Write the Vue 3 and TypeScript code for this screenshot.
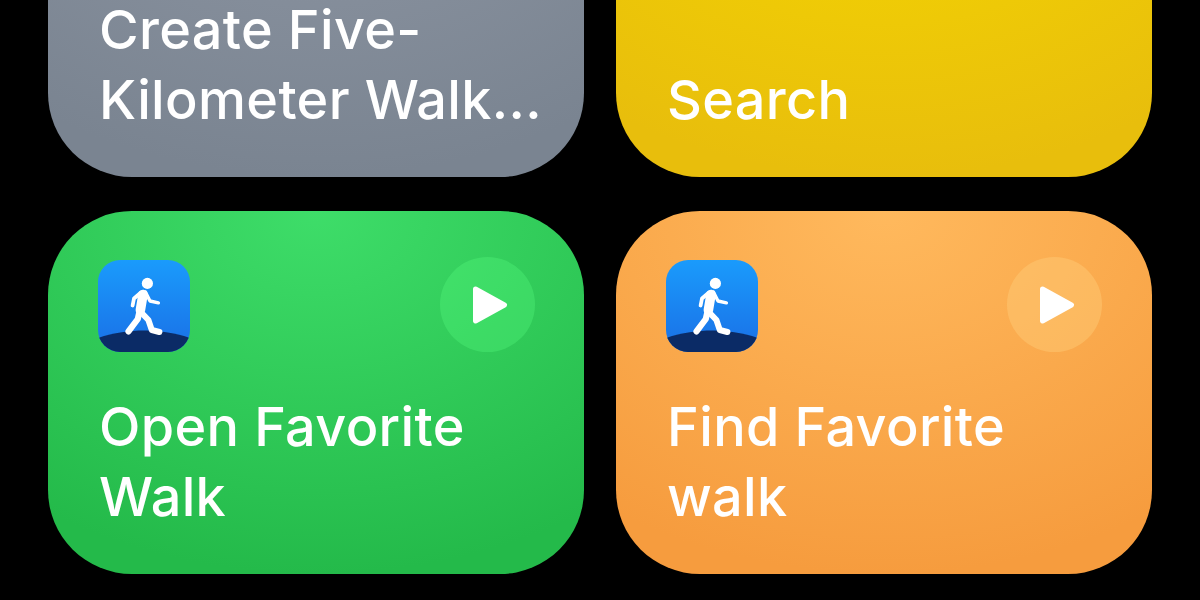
<script setup lang="ts">
interface Shortcut {
  title: string
  color: string
  app: boolean
}

const shortcuts: Shortcut[] = [
  { title: 'Create Five-\nKilometer Walk...', color: 'gray', app: false },
  { title: 'Search', color: 'yellow', app: false },
  { title: 'Open Favorite\nWalk', color: 'green', app: true },
  { title: 'Find Favorite\nwalk', color: 'orange', app: true },
]
</script>

<template>
  <div class="screen">
    <div class="grid">
      <div v-for="item in shortcuts" :key="item.title" class="card" :class="item.color">
        <div v-if="item.app" class="top">
          <svg class="app-icon" viewBox="0 0 92 92" width="92" height="92">
            <defs>
              <linearGradient id="sky" x1="0" y1="0" x2="0" y2="1">
                <stop offset="0" stop-color="#1a9bfc" />
                <stop offset="1" stop-color="#1a6fe6" />
              </linearGradient>
            </defs>
            <rect width="92" height="92" fill="url(#sky)" />
            <path d="M0 78 C16 72.5 32 70.5 46 70.5 C60 70.5 76 72.5 92 78 V92 H0 Z" fill="#0b2b66" />
            <circle cx="49.4" cy="23.4" r="5.6" fill="#fff" />
            <g fill="none" stroke="#fff" stroke-linecap="round" stroke-linejoin="round">
              <path d="M45 34.5 L42.4 50" stroke-width="9.6" />
              <path d="M41.4 52 L39.8 59 L30.5 71.4" stroke-width="6.2" />
              <path d="M42.8 52 L50.4 60 L53.8 70 L61.4 72" stroke-width="6" />
              <path d="M42.4 33 L36 38.5 L34.6 45.5" stroke-width="3.8" />
              <path d="M47.4 32 L52 41 L60.4 42.8" stroke-width="3.4" />
            </g>
          </svg>
          <div class="play">
            <svg viewBox="0 0 36 40" width="36" height="40">
              <path d="M3.5 4 L32.5 20 L3.5 36 Z" fill="#fff" stroke="#fff" stroke-width="5" stroke-linejoin="round" />
            </svg>
          </div>
        </div>
        <div class="title">{{ item.title }}</div>
      </div>
    </div>
  </div>
</template>

<style>
html,
body {
  margin: 0;
  background: #000;
}
</style>

<style scoped>
.screen {
  width: 1200px;
  height: 600px;
  overflow: hidden;
  display: flex;
  align-items: flex-end;
  background: #000;
  font-family: Inter, 'Liberation Sans', sans-serif;
}

.grid {
  box-sizing: border-box;
  width: 100%;
  padding: 0 48px 26px;
  display: grid;
  grid-template-columns: 536px 536px;
  grid-auto-rows: 363px;
  column-gap: 32px;
  row-gap: 34px;
}

.card {
  box-sizing: border-box;
  padding: 46px 49px 42px 50px;
  border-radius: 84px;
  display: flex;
  flex-direction: column;
  justify-content: flex-end;
  color: #fff;
}

.gray {
  background: radial-gradient(ellipse 90% 100% at 50% 0, #8f97a4, #7a8491);
}

.yellow {
  background: radial-gradient(ellipse 90% 100% at 50% 0, #f6d800, #e8be0c);
}

.green {
  background: radial-gradient(ellipse 90% 100% at 50% 0, #3edd69, #24ba4a);
}

.orange {
  padding-right: 50px;
  background: radial-gradient(ellipse 90% 100% at 50% 0, #ffb95d, #f69c3e);
}

.top {
  display: flex;
  justify-content: space-between;
  align-items: flex-end;
  margin-bottom: auto;
}

.app-icon {
  display: block;
  border-radius: 22px;
}

.play {
  width: 95px;
  height: 95px;
  border-radius: 50%;
  display: flex;
  align-items: center;
  justify-content: center;
}

.green .play {
  background: rgba(90, 255, 130, 0.3);
}

.orange .play {
  background: rgba(255, 205, 120, 0.45);
}

.play svg {
  margin-left: 5px;
}

.title {
  padding-left: 1px;
  font-size: 54px;
  font-weight: 530;
  line-height: 70px;
  letter-spacing: 0.35px;
  white-space: pre;
}
</style>
